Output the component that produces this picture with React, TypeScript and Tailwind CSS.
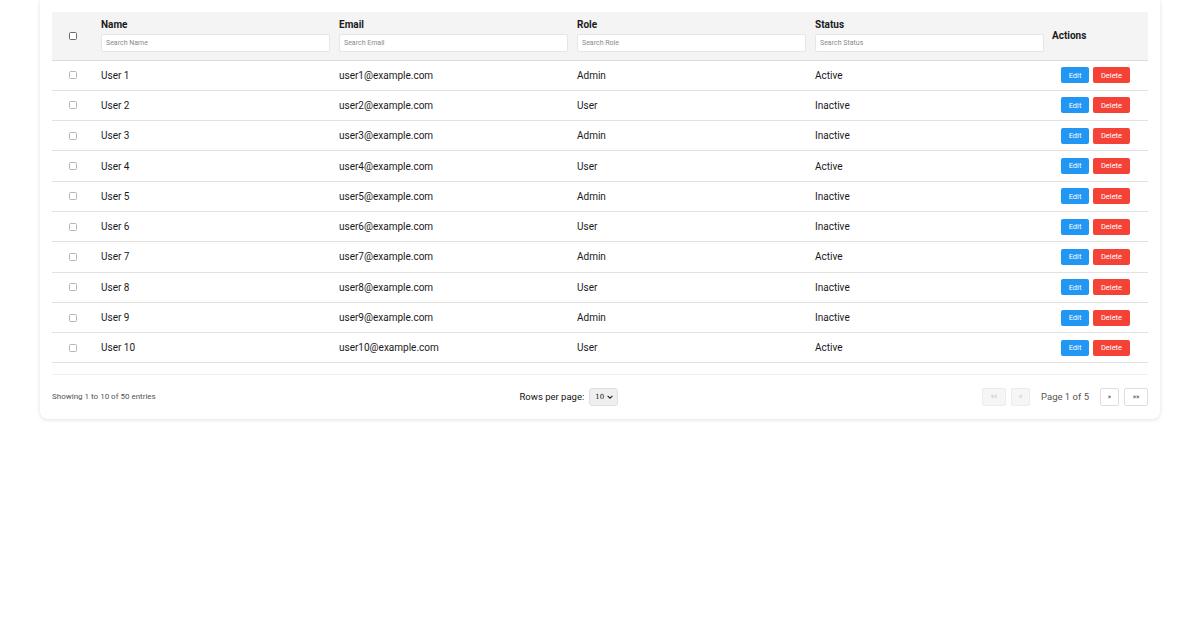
import { useState } from 'react'

type User = {
  id: number
  name: string
  email: string
  role: string
  status: string
}

const statuses = ['Active', 'Inactive', 'Inactive', 'Active', 'Inactive', 'Inactive', 'Active', 'Inactive', 'Inactive', 'Active']

const users: User[] = Array.from({ length: 10 }, (_, i) => ({
  id: i + 1,
  name: `User ${i + 1}`,
  email: `user${i + 1}@example.com`,
  role: i % 2 === 0 ? 'Admin' : 'User',
  status: statuses[i]
}))

const columns = [
  { key: 'name', label: 'Name' },
  { key: 'email', label: 'Email' },
  { key: 'role', label: 'Role' },
  { key: 'status', label: 'Status' }
] as const

const Box = ({ dark }: { dark?: boolean }) => (
  <span
    className={`inline-block w-[8px] h-[8px] rounded-[1.5px] border bg-white ${
      dark ? 'border-[#6b6b6b]' : 'border-[#b5b5b5]'
    }`}
  />
)

const PageButton = ({ label, disabled, wide }: { label: string; disabled?: boolean; wide?: boolean }) => (
  <button
    className={`h-[18px] ${wide ? 'w-[24px]' : 'w-[19px]'} rounded-[2px] border text-[7px] leading-none ${
      disabled
        ? 'bg-[#f6f6f6] border-[#ececec] text-[#c4c4c4]'
        : 'bg-white border-[#dedede] text-[#333]'
    }`}
  >
    {label}
  </button>
)

const App = () => {
  const [rows, setRows] = useState('10')

  return (
    <div className="w-full min-h-[630px] bg-white font-['Roboto','Liberation_Sans',sans-serif] text-[#1a1a1a]">
      <div className="mx-[40px] rounded-b-lg bg-white p-3 shadow-[0_1px_4px_rgba(0,0,0,0.12)]">
        <table className="w-full table-fixed border-collapse">
          <colgroup>
            <col className="w-[41px]" />
            <col className="w-[238px]" />
            <col className="w-[238px]" />
            <col className="w-[238px]" />
            <col className="w-[238px]" />
            <col />
          </colgroup>
          <thead>
            <tr className="bg-[#f4f4f4] border-b border-[#dcdcdc]">
              <th className="h-[48px] text-center align-middle">
                <span className="flex justify-center pl-[1px]">
                  <Box dark />
                </span>
              </th>
              {columns.map(c => (
                <th key={c.key} className="pt-[6px] pb-[7px] pl-[8px] pr-[1px] text-left align-top">
                  <div className="text-[10px] leading-[14px] font-bold mb-[2px]">{c.label}</div>
                  <input
                    placeholder={`Search ${c.label}`}
                    className="block w-full h-[18px] rounded-[2px] border border-[#e6e6e6] bg-white px-[4px] text-[7px] font-normal placeholder:text-[#8a8a8a] outline-none"
                  />
                </th>
              ))}
              <th className="pl-[7px] text-left align-middle text-[10px] font-bold">Actions</th>
            </tr>
          </thead>
          <tbody>
            {users.map(u => (
              <tr key={u.id} className="border-b border-[#e2e2e2]">
                <td className="h-[30.3px] text-center align-middle">
                  <span className="flex justify-center pl-[1px]">
                    <Box />
                  </span>
                </td>
                <td className="pl-[8px] text-[10px]">{u.name}</td>
                <td className="pl-[8px] text-[10px]">{u.email}</td>
                <td className="pl-[8px] text-[10px]">{u.role}</td>
                <td className="pl-[8px] text-[10px]">{u.status}</td>
                <td className="align-middle">
                  <div className="flex justify-center gap-[4px] pr-[2px]">
                    <button className="h-[16px] w-[28px] rounded-[2px] bg-[#2196f3] text-[7.5px] text-white">Edit</button>
                    <button className="h-[16px] w-[37px] rounded-[2px] bg-[#f44336] text-[7.5px] text-white">Delete</button>
                  </div>
                </td>
              </tr>
            ))}
          </tbody>
        </table>
        <div className="h-[12px] border-b border-[#f0f0f0]" />
        <div className="flex items-center justify-between pt-[13px] pb-[1px]">
          <span className="text-[8px] text-[#555]">Showing 1 to 10 of 50 entries</span>
          <div className="flex items-center gap-[5px]">
            <span className="text-[9.5px] text-[#111]">Rows per page:</span>
            <div className="relative h-[18px] w-[29px]">
              <select
                value={rows}
                onChange={e => setRows(e.target.value)}
                className="block h-[18px] w-[29px] appearance-none rounded-[3px] border border-[#e0e0e0] bg-[#efefef] py-0 pl-[5px] text-[7px] leading-[16px] text-[#111] font-['DejaVu_Serif',serif] outline-none"
              >
                <option value="10">10</option>
                <option value="20">20</option>
                <option value="50">50</option>
              </select>
              <svg
                viewBox="0 0 10 6"
                className="pointer-events-none absolute right-[5px] top-[7px] w-[6px] h-[4px]"
              >
                <path d="M1 1l4 4 4-4" fill="none" stroke="#222" strokeWidth="1.8" />
              </svg>
            </div>
          </div>
          <div className="flex items-center gap-[5px]">
            <PageButton label="««" disabled wide />
            <PageButton label="«" disabled />
            <span className="mx-[6px] text-[9.5px] text-[#555]">Page 1 of 5</span>
            <PageButton label="»" />
            <PageButton label="»»" wide />
          </div>
        </div>
      </div>
    </div>
  )
}

export default App
